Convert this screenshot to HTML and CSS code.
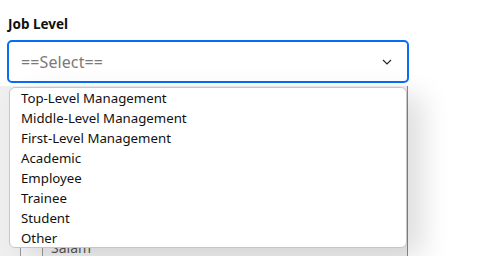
FILE: index.html
```html
<!DOCTYPE html>
<html>
<head>
<meta charset="utf-8">
<link rel="stylesheet" href="styles.css">
</head>
<body>
<div class="page">
  <label class="label">Job Level</label>
  <div class="select">
    <span class="placeholder">==Select==</span>
    <svg class="chevron" width="10" height="6" viewBox="0 0 10 6"><path d="M1 1 L5 5 L9 1" fill="none" stroke="#222" stroke-width="1.1"/></svg>
  </div>
  <div class="backdrop">
    <div class="under-row">
      <span class="checkbox"></span>
      <span class="under-text">Salam</span>
    </div>
  </div>
  <ul class="popup">
    <li>Top-Level Management</li>
    <li>Middle-Level Management</li>
    <li>First-Level Management</li>
    <li>Academic</li>
    <li>Employee</li>
    <li>Trainee</li>
    <li>Student</li>
    <li>Other</li>
  </ul>
</div>
</body>
</html>
```
FILE: styles.css
```css
html, body {
  margin: 0;
  padding: 0;
  background: #fff;
  width: 491px;
  height: 256px;
  overflow: hidden;
  font-family: "Noto Sans", "Open Sans", sans-serif;
}
.page {
  position: relative;
  padding: 15px 0 0 7px;
  height: 256px;
  box-sizing: border-box;
  overflow: hidden;
}
.label {
  display: block;
  font-weight: 700;
  font-size: 13.5px;
  line-height: 18px;
  color: #111;
  padding-left: 1px;
  margin-bottom: 7px;
}
.select {
  width: 402px;
  height: 43px;
  box-sizing: border-box;
  border: 2px solid #0a6cf5;
  border-radius: 5px;
  display: flex;
  align-items: center;
  justify-content: space-between;
  padding: 0 15px 0 12px;
}
.placeholder {
  font-size: 16px;
  color: #7a7a7a;
  letter-spacing: 0.1px;
}
.chevron {
  display: block;
}
.backdrop {
  margin-top: 3px;
  margin-left: -7px;
  width: 408px;
  height: 170px;
  box-sizing: border-box;
  background: #efefef;
  border-right: 1px solid #8a8a8a;
  position: relative;
  overflow: hidden;
}
.under-row {
  position: absolute;
  top: 154px;
  left: 20px;
  display: flex;
  align-items: flex-start;
  gap: 8px;
}
.checkbox {
  width: 21px;
  height: 20px;
  border: 1px solid #9a9a9a;
  border-radius: 4px;
  background: #f4f4f4;
}
.under-text {
  font-size: 14px;
  line-height: 20px;
  color: #555;
  margin-top: -2px;
}
.popup {
  position: absolute;
  left: 9px;
  top: 87px;
  width: 398px;
  height: 161px;
  box-sizing: border-box;
  margin: 0;
  padding: 0;
  list-style: none;
  background: #fff;
  border: 1px solid #c6c6c6;
  border-radius: 6px;
  box-shadow: 16px 8px 28px rgba(0,0,0,0.13);
}
.popup li {
  font-size: 13.25px;
  line-height: 20px;
  height: 20px;
  padding-left: 11px;
  color: #111;
  white-space: nowrap;
}
```
